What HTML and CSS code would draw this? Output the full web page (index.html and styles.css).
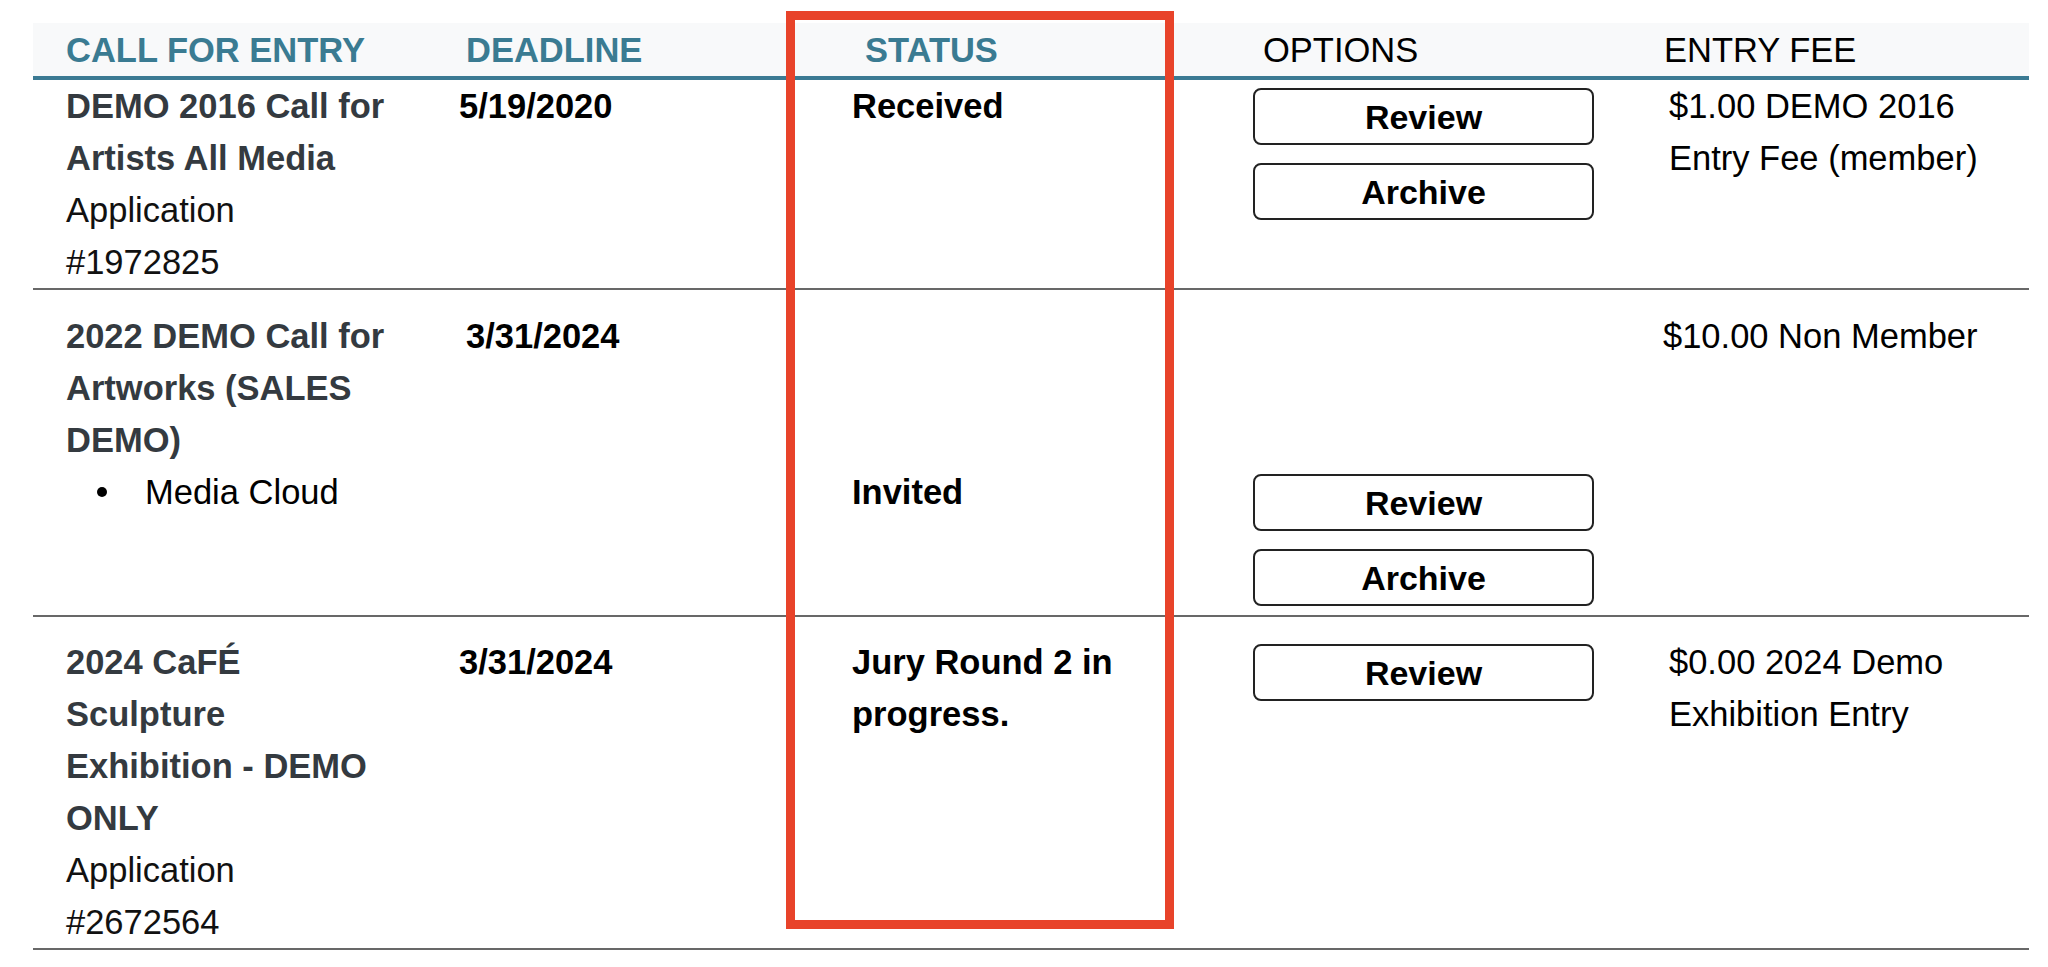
FILE: index.html
```html
<!DOCTYPE html>
<html lang="en">
<head>
<meta charset="utf-8">
<title>My Entries</title>
<link rel="stylesheet" href="styles.css">
</head>
<body>
<div class="page">
  <div class="entries">
    <div class="thead">
      <div class="th th-call">CALL FOR ENTRY</div>
      <div class="th th-deadline">DEADLINE</div>
      <div class="th th-status">STATUS</div>
      <div class="th th-options">OPTIONS</div>
      <div class="th th-fee">ENTRY FEE</div>
    </div>

    <div class="tr tr-first">
      <div class="td call">
        <div class="title">DEMO 2016 Call for Artists All Media</div>
        <div class="app">Application #1972825</div>
      </div>
      <div class="td deadline">5/19/2020</div>
      <div class="td status">Received</div>
      <div class="td options">
        <button class="btn" type="button">Review</button>
        <button class="btn" type="button">Archive</button>
      </div>
      <div class="td fee">$1.00 DEMO 2016 Entry Fee (member)</div>
    </div>

    <div class="tr tr-split">
      <div class="td call sub-a">
        <div class="title">2022 DEMO Call for Artworks (SALES DEMO)</div>
      </div>
      <div class="td deadline deadline-alt sub-a">3/31/2024</div>
      <div class="td fee fee-alt sub-a col-5">$10.00 Non Member</div>
      <div class="td call sub-b col-1">
        <ul class="media">
          <li class="media-item">Media Cloud</li>
        </ul>
      </div>
      <div class="td status sub-b col-3">Invited</div>
      <div class="td options sub-b col-4">
        <button class="btn" type="button">Review</button>
        <button class="btn" type="button">Archive</button>
      </div>
    </div>

    <div class="tr tr-last">
      <div class="td call">
        <div class="title">2024 CaFÉ Sculpture Exhibition - DEMO ONLY</div>
        <div class="app">Application #2672564</div>
      </div>
      <div class="td deadline">3/31/2024</div>
      <div class="td status">Jury Round 2 in progress.</div>
      <div class="td options">
        <button class="btn" type="button">Review</button>
      </div>
      <div class="td fee">$0.00 2024 Demo Exhibition Entry</div>
    </div>
  </div>

  <div class="highlight" aria-hidden="true"></div>
</div>
</body>
</html>
```

FILE: styles.css
```css
html, body {
  margin: 0;
  padding: 0;
  background: #ffffff;
}

body {
  font-family: "Liberation Sans", Arial, Helvetica, sans-serif;
  font-size: 34.5px;
  line-height: 52px;
  color: #111111;
}

.page {
  position: relative;
  padding: 23px 0 0 33px;
  height: 944px;
}

.entries {
  width: 1996px;
}

.thead,
.tr {
  display: grid;
  grid-template-columns: 393px 393px 401px 416px 393px;
}

/* ---------- header ---------- */
.thead {
  background: #f8f9fa;
  border-bottom: 4px solid #3b7a93;
  padding-top: 1px;
}

.th {
  font-weight: bold;
  color: #3a7b92;
  white-space: nowrap;
}

.th-call { padding-left: 33px; }
.th-deadline { padding-left: 40px; }
.th-status { padding-left: 46px; }
.th-options {
  padding-left: 43px;
  font-weight: normal;
  color: #000000;
}
.th-fee {
  padding-left: 28px;
  font-weight: normal;
  color: #000000;
}

/* ---------- rows ---------- */
.tr {
  border-bottom: 2px solid #686868;
  align-items: start;
}

.tr-first { padding-top: 0; }
.tr-split {
  padding-top: 20px;
  grid-template-rows: 156px auto;
}
.tr-last { padding-top: 19px; }

.td {
  padding: 0 33px;
}

.title {
  font-weight: bold;
  color: #343a40;
}

.app {
  color: #111111;
}

.deadline {
  font-weight: bold;
  color: #000000;
}
.deadline-alt { padding-left: 40px; }

.status {
  font-weight: bold;
  color: #000000;
}

.options {
  display: flex;
  flex-direction: column;
  gap: 18px;
  padding-top: 8px;
  padding-bottom: 9px;
}

.btn {
  display: flex;
  align-items: center;
  justify-content: center;
  width: 341px;
  height: 57px;
  padding: 0;
  margin: 0;
  background: #ffffff;
  border: 2px solid #222222;
  border-radius: 8px;
  font-family: "Liberation Sans", Arial, Helvetica, sans-serif;
  font-size: 34px;
  font-weight: bold;
  color: #000000;
  line-height: 1;
}

.fee {
  color: #000000;
}
.fee-alt { padding-left: 27px; }

/* split row placement */
.sub-a { grid-row: 1; }
.sub-b { grid-row: 2; }
.col-1 { grid-column: 1; }
.col-3 { grid-column: 3; }
.col-4 { grid-column: 4; }
.col-5 { grid-column: 5; }

.media {
  list-style: none;
  margin: 0;
  padding: 0;
}

.media-item {
  display: flex;
  align-items: center;
  color: #000000;
}

.media-item::before {
  content: "";
  flex: none;
  width: 10px;
  height: 10px;
  border-radius: 50%;
  background: #000000;
  margin-left: 31px;
  margin-right: 38px;
}

/* ---------- annotation box ---------- */
.highlight {
  position: absolute;
  left: 786px;
  top: 11px;
  width: 388px;
  height: 918px;
  box-sizing: border-box;
  border: 9px solid #e8432a;
  pointer-events: none;
}
```
